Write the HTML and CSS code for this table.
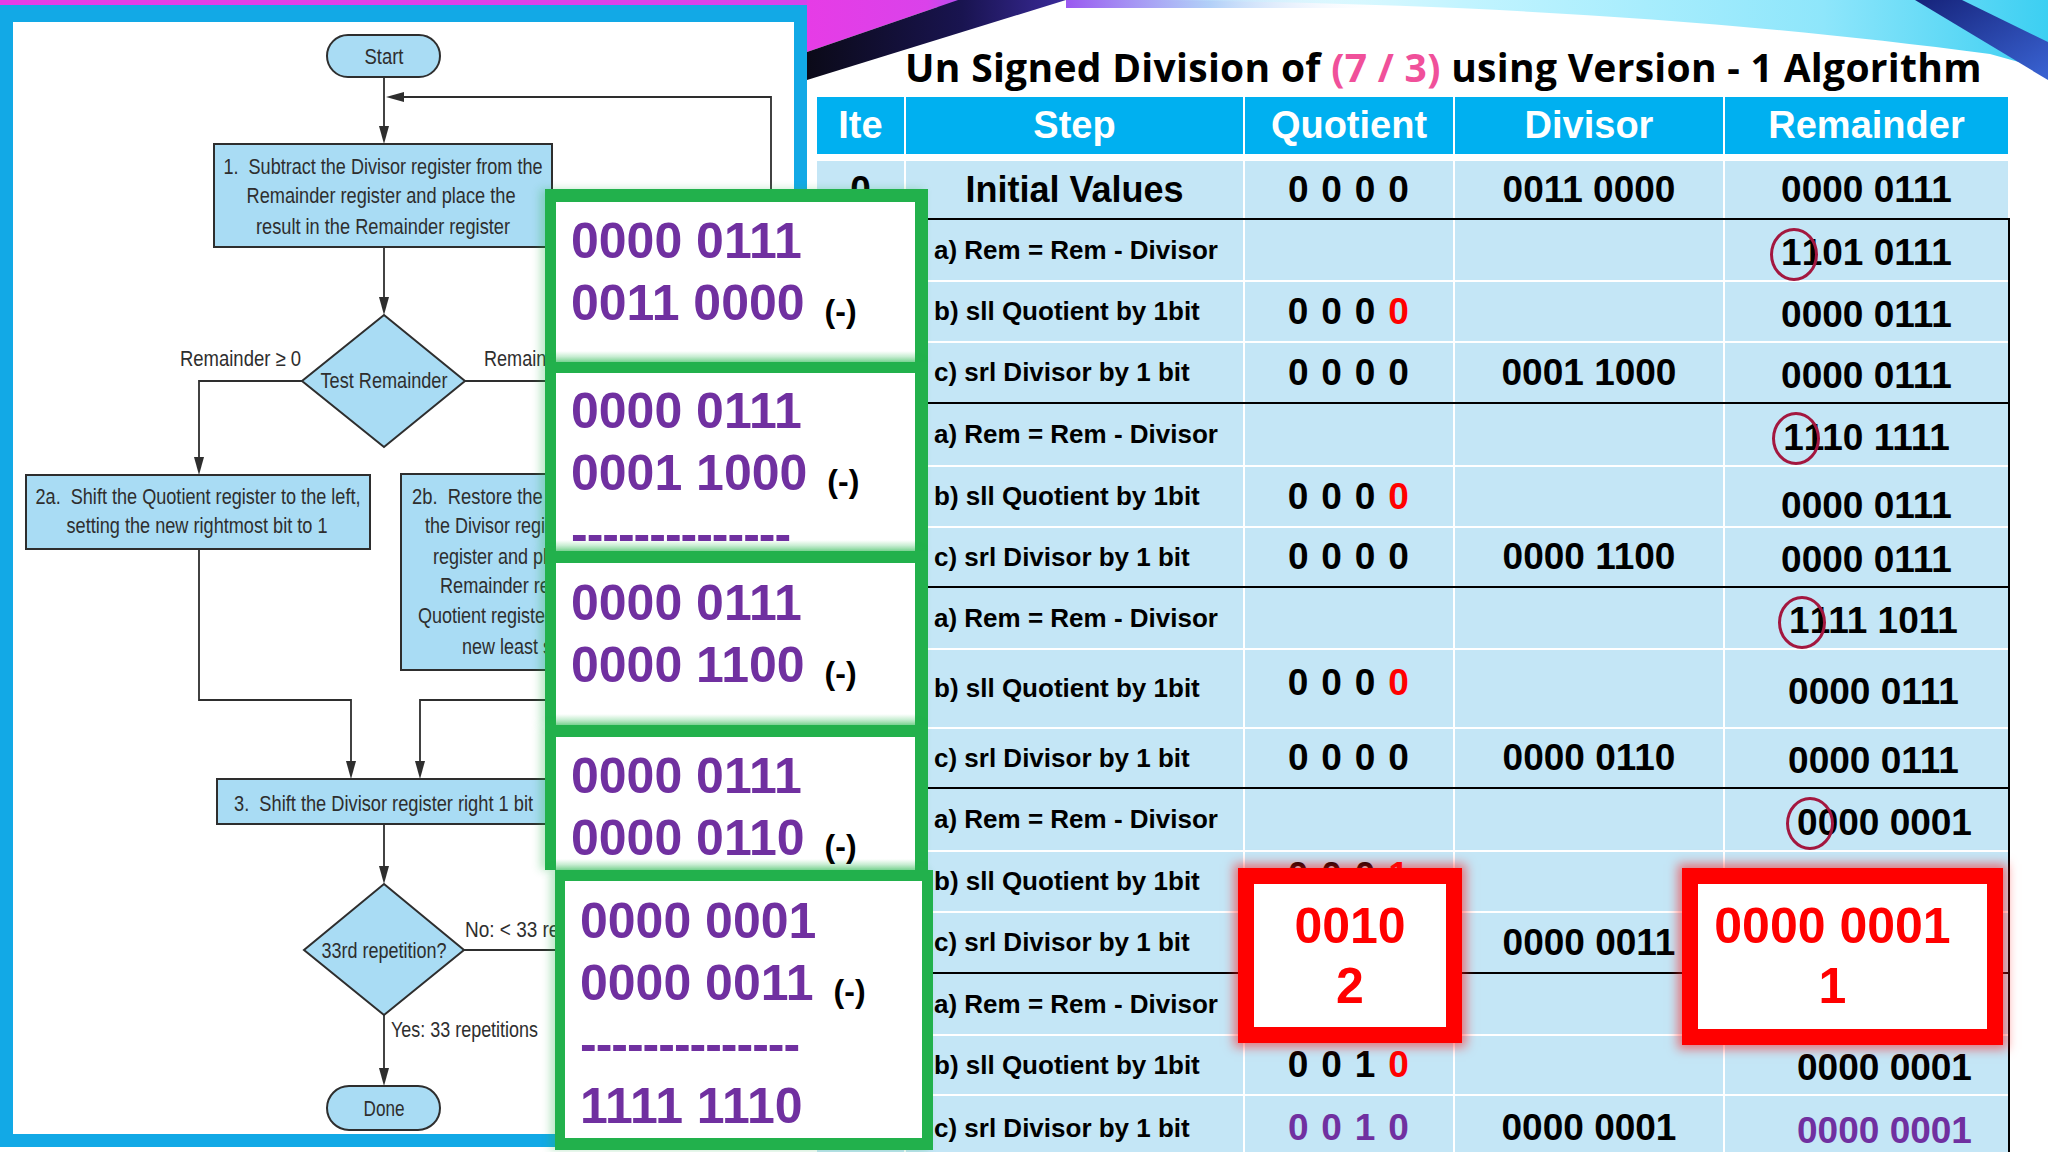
FILE: index.html
```html
<!DOCTYPE html>
<html lang="en">
<head>
<meta charset="utf-8">
<title>Un Signed Division of (7 / 3) using Version - 1 Algorithm</title>
<link rel="stylesheet" href="styles.css">
</head>
<body>
<div class="slide">
  <svg class="deco" width="2048" height="120" viewBox="0 0 2048 120" aria-hidden="true">
    <defs>
      <linearGradient id="mag" x1="0" x2="1" y1="0" y2="0">
        <stop offset="0" stop-color="#e63ce6"/>
        <stop offset="0.8" stop-color="#da42ea"/>
        <stop offset="1" stop-color="#b84cf0"/>
      </linearGradient>
      <linearGradient id="fadeTop" x1="0" x2="1" y1="0" y2="0">
        <stop offset="0" stop-color="#9a58f0"/>
        <stop offset="0.45" stop-color="#9fc4f6" stop-opacity="0.8"/>
        <stop offset="1" stop-color="#ffffff" stop-opacity="0"/>
      </linearGradient>
      <linearGradient id="dark" x1="0" x2="1" y1="0" y2="0">
        <stop offset="0" stop-color="#0b0a18"/>
        <stop offset="0.6" stop-color="#191450"/>
        <stop offset="1" stop-color="#3a2a9a"/>
      </linearGradient>
      <linearGradient id="cyan" x1="0" x2="1" y1="0" y2="0">
        <stop offset="0" stop-color="#c8f6ff" stop-opacity="0"/>
        <stop offset="0.35" stop-color="#c2f4ff"/>
        <stop offset="0.75" stop-color="#8ee6fb"/>
        <stop offset="1" stop-color="#3ccff2"/>
      </linearGradient>
      <linearGradient id="navy" x1="0" y1="0" x2="1" y2="1">
        <stop offset="0" stop-color="#16237a"/>
        <stop offset="1" stop-color="#3a64d4"/>
      </linearGradient>
    </defs>
    <rect x="0" y="0" width="960" height="7" fill="url(#mag)"/>
    <polygon points="807,0 958,0 807,52" fill="url(#mag)"/>
    <polygon points="807,52 958,0 1066,0 807,80" fill="url(#dark)"/>
    <rect x="1066" y="0" width="320" height="8" fill="url(#fadeTop)"/>
    <path d="M1150 0 C1450 4 1700 16 1990 54 L2048 70 L2048 0 Z" fill="url(#cyan)"/>
    <polygon points="1915,0 1962,0 2048,42 2048,80" fill="url(#navy)"/>
  </svg>

  <section class="flow-panel">
    <svg class="flow" width="781" height="1112" viewBox="13 22 781 1112">
      <g class="edges">
        <line x1="384" y1="77" x2="384" y2="128"/>
        <polyline points="771,950 771,97 404,97"/>
        <line x1="384" y1="247" x2="384" y2="299"/>
        <polyline points="302,381 199,381 199,459"/>
        <line x1="465" y1="381" x2="720" y2="381"/>
        <polyline points="199,549 199,700 351,700 351,763"/>
        <polyline points="720,700 420,700 420,763"/>
        <line x1="384" y1="824" x2="384" y2="868"/>
        <line x1="464" y1="950" x2="771" y2="950"/>
        <line x1="384" y1="1015" x2="384" y2="1070"/>
      </g>
      <g class="heads">
        <polygon points="379,126 389,126 384,144"/>
        <polygon points="404,92 404,102 386,97"/>
        <polygon points="379,297 389,297 384,315"/>
        <polygon points="194,457 204,457 199,475"/>
        <polygon points="346,761 356,761 351,779"/>
        <polygon points="415,761 425,761 420,779"/>
        <polygon points="379,866 389,866 384,884"/>
        <polygon points="379,1068 389,1068 384,1086"/>
      </g>
      <g class="nodes">
        <rect x="327" y="35" width="113" height="42" rx="21"/>
        <rect x="214" y="144" width="338" height="103"/>
        <polygon points="384,315 465,381 384,447 302,381"/>
        <rect x="26" y="475" width="344" height="74"/>
        <rect x="401" y="474" width="400" height="196"/>
        <rect x="217" y="779" width="335" height="45"/>
        <polygon points="384,884 464,950 384,1015 304,950"/>
        <rect x="327" y="1086" width="113" height="44" rx="22"/>
      </g>
      <g class="ft">
        <text x="384" y="64" class="mid" textLength="39" lengthAdjust="spacingAndGlyphs">Start</text>
        <text x="383" y="174" class="mid" textLength="319" lengthAdjust="spacingAndGlyphs">1.  Subtract the Divisor register from the</text>
        <text x="381" y="203" class="mid" textLength="269" lengthAdjust="spacingAndGlyphs">Remainder register and place the</text>
        <text x="383" y="234" class="mid" textLength="254" lengthAdjust="spacingAndGlyphs">result in the Remainder register</text>
        <text x="180" y="366" textLength="121" lengthAdjust="spacingAndGlyphs">Remainder ≥ 0</text>
        <text x="384" y="388" class="mid" textLength="127" lengthAdjust="spacingAndGlyphs">Test Remainder</text>
        <text x="484" y="366" textLength="119" lengthAdjust="spacingAndGlyphs">Remainder &lt; 0</text>
        <text x="198" y="504" class="mid" textLength="325" lengthAdjust="spacingAndGlyphs">2a.  Shift the Quotient register to the left,</text>
        <text x="197" y="533" class="mid" textLength="261" lengthAdjust="spacingAndGlyphs">setting the new rightmost bit to 1</text>
        <text x="412" y="504" textLength="329" lengthAdjust="spacingAndGlyphs">2b.  Restore the original value by adding</text>
        <text x="425" y="533" textLength="293" lengthAdjust="spacingAndGlyphs">the Divisor register to the Remainder</text>
        <text x="433" y="564" textLength="261" lengthAdjust="spacingAndGlyphs">register and place the sum in the</text>
        <text x="440" y="593" textLength="266" lengthAdjust="spacingAndGlyphs">Remainder register. Also shift the</text>
        <text x="418" y="623" textLength="305" lengthAdjust="spacingAndGlyphs">Quotient register to the left, setting the</text>
        <text x="462" y="654" textLength="220" lengthAdjust="spacingAndGlyphs">new least significant bit to 0</text>
        <text x="234" y="811" textLength="299" lengthAdjust="spacingAndGlyphs">3.  Shift the Divisor register right 1 bit</text>
        <text x="465" y="937" textLength="165" lengthAdjust="spacingAndGlyphs">No: &lt; 33 repetitions</text>
        <text x="384" y="958" class="mid" textLength="125" lengthAdjust="spacingAndGlyphs">33rd repetition?</text>
        <text x="391" y="1037" textLength="147" lengthAdjust="spacingAndGlyphs">Yes: 33 repetitions</text>
        <text x="384" y="1116" class="mid" textLength="41" lengthAdjust="spacingAndGlyphs">Done</text>
      </g>
    </svg>
  </section>

  <main class="right">
    <h1 class="title">Un Signed Division of <span class="pink">(7 / 3)</span> using Version - 1 Algorithm</h1>
    <div class="table">
      <div class="grid head">
        <div class="c"><span>Ite</span></div>
        <div class="c"><span>Step</span></div>
        <div class="c"><span>Quotient</span></div>
        <div class="c"><span>Divisor</span></div>
        <div class="c"><span>Remainder</span></div>
      </div>
      <div class="grid init">
        <div class="c"><span>0</span></div>
        <div class="c init-step"><span>Initial Values</span></div>
        <div class="c q"><span>0 0 0 0</span></div>
        <div class="c"><span>0011 0000</span></div>
        <div class="c"><span>0000 0111</span></div>
      </div>

      <div class="grid group g1">
        <div class="c"></div>
        <div class="c step"><span>a) Rem = Rem - Divisor</span></div>
        <div class="c"></div>
        <div class="c"></div>
        <div class="c rem"><span><span class="msb">1</span>101 0111</span></div>

        <div class="c"></div>
        <div class="c step"><span>b) sll Quotient by 1bit</span></div>
        <div class="c q"><span>0 0 0 <span class="red">0</span></span></div>
        <div class="c"></div>
        <div class="c rem"><span>0000 0111</span></div>

        <div class="c"></div>
        <div class="c step"><span>c) srl Divisor by 1 bit</span></div>
        <div class="c q"><span>0 0 0 0</span></div>
        <div class="c"><span>0001 1000</span></div>
        <div class="c rem"><span>0000 0111</span></div>
      </div>

      <div class="grid group g2">
        <div class="c"></div>
        <div class="c step"><span>a) Rem = Rem - Divisor</span></div>
        <div class="c"></div>
        <div class="c"></div>
        <div class="c rem"><span><span class="msb">1</span>110 1111</span></div>

        <div class="c"></div>
        <div class="c step"><span>b) sll Quotient by 1bit</span></div>
        <div class="c q"><span>0 0 0 <span class="red">0</span></span></div>
        <div class="c"></div>
        <div class="c rem low"><span>0000 0111</span></div>

        <div class="c"></div>
        <div class="c step"><span>c) srl Divisor by 1 bit</span></div>
        <div class="c q"><span>0 0 0 0</span></div>
        <div class="c"><span>0000 1100</span></div>
        <div class="c rem"><span>0000 0111</span></div>
      </div>

      <div class="grid group g3">
        <div class="c"></div>
        <div class="c step"><span>a) Rem = Rem - Divisor</span></div>
        <div class="c"></div>
        <div class="c"></div>
        <div class="c rem shift"><span><span class="msb">1</span>111 1011</span></div>

        <div class="c"></div>
        <div class="c step"><span>b) sll Quotient by 1bit</span></div>
        <div class="c q high"><span>0 0 0 <span class="red">0</span></span></div>
        <div class="c"></div>
        <div class="c rem shift"><span>0000 0111</span></div>

        <div class="c"></div>
        <div class="c step"><span>c) srl Divisor by 1 bit</span></div>
        <div class="c q"><span>0 0 0 0</span></div>
        <div class="c"><span>0000 0110</span></div>
        <div class="c rem shift"><span>0000 0111</span></div>
      </div>

      <div class="grid group g4">
        <div class="c"></div>
        <div class="c step"><span>a) Rem = Rem - Divisor</span></div>
        <div class="c"></div>
        <div class="c"></div>
        <div class="c rem shift2"><span><span class="msb">0</span>000 0001</span></div>

        <div class="c"></div>
        <div class="c step"><span>b) sll Quotient by 1bit</span></div>
        <div class="c q high"><span>0 0 0 <span class="red">1</span></span></div>
        <div class="c"></div>
        <div class="c"></div>

        <div class="c"></div>
        <div class="c step"><span>c) srl Divisor by 1 bit</span></div>
        <div class="c"></div>
        <div class="c"><span>0000 0011</span></div>
        <div class="c"></div>
      </div>

      <div class="grid group g5">
        <div class="c"></div>
        <div class="c step"><span>a) Rem = Rem - Divisor</span></div>
        <div class="c"></div>
        <div class="c"></div>
        <div class="c"></div>

        <div class="c"></div>
        <div class="c step"><span>b) sll Quotient by 1bit</span></div>
        <div class="c q"><span>0 0 1 <span class="red">0</span></span></div>
        <div class="c"></div>
        <div class="c rem shift2"><span>0000 0001</span></div>

        <div class="c"></div>
        <div class="c step"><span>c) srl Divisor by 1 bit</span></div>
        <div class="c q purple"><span>0 0 1 0</span></div>
        <div class="c"><span>0000 0001</span></div>
        <div class="c rem shift2 purple"><span>0000 0001</span></div>
      </div>
    </div>
  </main>

  <div class="calc-stack">
    <div class="calc b1">
      <p>0000 0111</p>
      <p>0011 0000<span class="minus">(-)</span></p>
    </div>
    <div class="calc b2">
      <p>0000 0111</p>
      <p>0001 1000<span class="minus">(-)</span></p>
      <p class="dash">--------------</p>
    </div>
    <div class="calc b3">
      <p>0000 0111</p>
      <p>0000 1100<span class="minus">(-)</span></p>
    </div>
    <div class="calc b4">
      <p>0000 0111</p>
      <p>0000 0110<span class="minus">(-)</span></p>
    </div>
    <div class="calc b5">
      <p>0000 0001</p>
      <p>0000 0011<span class="minus">(-)</span></p>
      <p class="dash">--------------</p>
      <p>1111 1110</p>
    </div>
  </div>

  <div class="callout cq"><p>0010</p><p>2</p></div>
  <div class="callout cr"><p>0000 0001</p><p>1</p></div>
</div>
</body>
</html>
```

FILE: styles.css
```css
* {
  box-sizing: border-box;
  margin: 0;
  padding: 0;
}

html,
body {
  width: 2048px;
  height: 1152px;
  overflow: hidden;
  background: #ffffff;
}

body {
  font-family: "Liberation Sans", Arial, sans-serif;
}

.slide {
  position: relative;
  width: 2048px;
  height: 1152px;
  display: flex;
  align-items: flex-start;
  overflow: hidden;
  background: #ffffff;
}

/* background swooshes */
.deco {
  position: absolute;
  left: 0;
  top: 0;
  z-index: 0;
}

/* flowchart panel */
.flow-panel {
  position: relative;
  z-index: 1;
  flex: none;
  width: 807px;
  height: 1142px;
  margin-top: 5px;
  border-style: solid;
  border-color: #12a9e6;
  border-width: 17px 13px 13px 13px;
  background: #ffffff;
}

.flow {
  display: block;
}

.edges line,
.edges polyline {
  fill: none;
  stroke: #2e2e2e;
  stroke-width: 1.8;
}

.heads polygon {
  fill: #2e2e2e;
}

.nodes rect,
.nodes polygon {
  fill: #a9dcf4;
  stroke: #2e2e2e;
  stroke-width: 2;
}

.ft text {
  font-family: "Liberation Sans Narrow", "Liberation Sans", Arial, sans-serif;
  font-size: 22px;
  fill: #2e2e2e;
  white-space: pre;
}

.ft .mid {
  text-anchor: middle;
}

/* right side: title + table */
.right {
  position: relative;
  z-index: 1;
  flex: none;
  margin-left: 10px;
  display: flex;
  flex-direction: column;
}

.title {
  height: 97px;
  padding-left: 88px;
  padding-top: 43px;
  font-family: "Open Sans", "DejaVu Sans", sans-serif;
  font-weight: 700;
  font-size: 39px;
  line-height: 48px;
  letter-spacing: 0.3px;
  color: #000000;
  white-space: nowrap;
}

.pink {
  color: #f0509a;
}

.table {
  display: flex;
  flex-direction: column;
  width: 1193px;
}

.grid {
  display: grid;
  grid-template-columns: 87px 337px 208px 268px 283px;
  column-gap: 2px;
  row-gap: 2px;
  width: 1191px;
  background: #ffffff;
}

.c {
  display: flex;
  align-items: center;
  justify-content: center;
  background: #c4e6f6;
  color: #000000;
  font-weight: 700;
  font-size: 37px;
  white-space: pre;
}

.head {
  grid-template-rows: 57px;
}

.head .c {
  background: #00b0f0;
  color: #ffffff;
  font-size: 38px;
}

.init {
  margin-top: 7px;
  grid-template-rows: 57px;
}

.init-step {
  font-size: 36px;
}

.group {
  width: 1193px;
  border-top: 2px solid #000000;
  border-right: 2px solid #000000;
}

.g1 { grid-template-rows: 60px 59px 59px; }
.g2 { grid-template-rows: 61px 59px 58px; }
.g3 { grid-template-rows: 60px 77px 58px; }
.g4 { grid-template-rows: 61px 59px 59px; }
.g5 { grid-template-rows: 60px 58px 64px; }

.step {
  justify-content: flex-start;
  padding-left: 28px;
  font-size: 26px;
}

.q {
  letter-spacing: 1.3px;
}

.rem {
  padding-top: 6px;
}

.low {
  padding-top: 18px;
}

.high {
  padding-bottom: 12px;
}

.shift {
  padding-left: 14px;
}

.shift2 {
  padding-left: 36px;
}

.red {
  color: #ff0000;
}

.purple {
  color: #7030a0;
}

.msb {
  position: relative;
}

.msb::after {
  content: "";
  position: absolute;
  left: 50%;
  top: 50%;
  width: 42px;
  height: 47px;
  margin-left: -21px;
  margin-top: -25px;
  border: 3px solid #a3173f;
  border-radius: 50%;
}

/* green calculation boxes laid over the picture */
.calc-stack {
  position: absolute;
  z-index: 2;
  left: 545px;
  top: 189px;
  width: 390px;
  display: flex;
  flex-direction: column;
}

.calc {
  width: 383px;
  border-style: solid;
  border-color: #22b14c;
  border-width: 12px 13px 0 11px;
  padding-left: 15px;
  background: linear-gradient(to bottom, #ffffff calc(100% - 11px), #c9eed3 calc(100% - 5px), #8ad9a0 100%);
  box-shadow: -5px 0 8px rgba(40, 180, 80, 0.3);
  overflow: hidden;
  color: #7030a0;
  font-weight: 700;
  font-size: 50px;
  line-height: 61.5px;
  white-space: nowrap;
}

.b1 {
  height: 173px;
  border-top-width: 13px;
  padding-top: 9px;
}

.b2 {
  height: 189px;
  border-top-width: 11px;
  padding-top: 8px;
}

.b3 {
  height: 174px;
  padding-top: 10px;
}

.b4 {
  height: 145px;
  padding-top: 9px;
}

.b5 {
  width: 378px;
  height: 280px;
  margin-left: 10px;
  border-width: 11px 11px 12px 10px;
  padding-top: 10px;
  background: #ffffff;
}

.dash {
  letter-spacing: -1px;
}

.minus {
  margin-left: 20px;
  font-size: 32px;
  line-height: 1;
  color: #000000;
  vertical-align: -2px;
}

/* red result callouts */
.callout {
  position: absolute;
  z-index: 3;
  border: 16px solid #ff0000;
  background: #ffffff;
  box-shadow: 0 0 10px 4px rgba(255, 20, 20, 0.55);
  color: #ff0000;
  font-weight: 700;
  font-size: 50px;
  line-height: 60px;
  text-align: center;
  padding-top: 12px;
}

.cq {
  left: 1238px;
  top: 868px;
  width: 224px;
  height: 175px;
}

.cr {
  left: 1682px;
  top: 868px;
  width: 321px;
  height: 177px;
  padding-right: 20px;
}
```
